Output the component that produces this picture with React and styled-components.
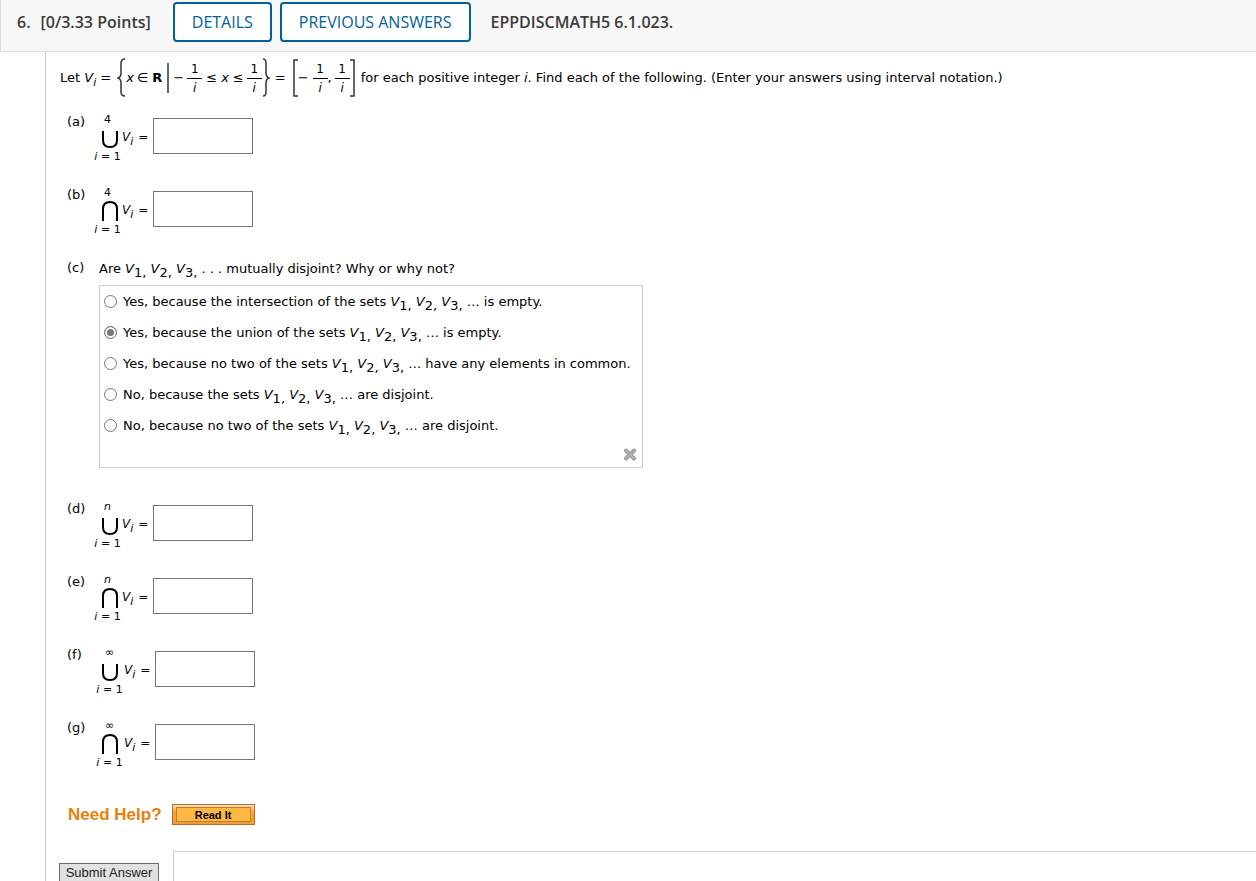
import React, { useState } from "react";
import styled, { createGlobalStyle } from "styled-components";

const GlobalStyle = createGlobalStyle`
  body {
    margin: 0;
    background: white;
    color: #000;
    font-family: Verdana, "DejaVu Sans", sans-serif;
    font-size: 13px;
    line-height: 18px;
  }

  *, *::before, *::after {
    box-sizing: border-box;
  }
`;

const Page = styled.div`
  display: flex;
  flex-direction: column;
  height: 100vh;
  overflow: hidden;
`;

const Header = styled.header`
  flex: none;
  display: flex;
  align-items: center;
  gap: 8px;
  padding: 2px 16px 9px;
  background: #f7f7f7;
  border-left: 1px solid #ddd;
  border-bottom: 1px solid #ddd;
  color: #3c3c3c;
  font-family: "Open Sans", sans-serif;
  font-size: 16px;
  font-weight: 600;
  line-height: 24px;
`;

const Points = styled.span`
  margin: 0 14px 0 2px;
`;

const SourceCode = styled.span`
  margin-left: 12px;
`;

const HeaderButton = styled.button`
  height: 40px;
  padding: 0 17px;
  border: 2px solid #00609c;
  border-radius: 4px;
  background: white;
  color: #00609c;
  font: inherit;
  font-weight: 500;
  cursor: pointer;
`;

const Body = styled.main`
  flex: 1;
  display: flex;
  flex-direction: column;
  margin-left: 45px;
  border-left: 1px solid #ccc;
`;

const Intro = styled.div`
  display: flex;
  align-items: center;
  height: 52px;
  padding-left: 14px;
  white-space: nowrap;
`;

const Term = styled.span`
  margin-right: ${(props) => props.$space ?? 4}px;
`;

const Delimiter = styled.svg`
  flex: none;
  fill: none;
  stroke: #333;
  stroke-width: 1.5;
  margin-right: ${(props) => props.$space || 0}px;
`;

const Frac = styled.span`
  display: inline-flex;
  flex-direction: column;
  align-items: center;
  width: 15px;
  margin-right: ${(props) => props.$space || 0}px;
  font-size: 12px;
  line-height: 18px;

  & > :first-child {
    width: 100%;
    border-bottom: 1px solid #000;
    text-align: center;
  }
`;

const Sub = styled.sub`
  font-size: ${(props) => (props.$small ? 11 : 13)}px;
  line-height: 0;
  vertical-align: -4px;
`;

const Part = styled.section`
  display: grid;
  grid-template-columns: 27px 1fr;
  padding-left: 21px;
  min-height: 73px;
`;

const PartLabel = styled.span`
  padding-top: 9px;
`;

const Equation = styled.label`
  display: flex;
  align-items: flex-start;
  height: 73px;
  padding-left: ${(props) => (props.$wide ? 2 : 0)}px;
`;

const BigOperator = styled.span`
  display: flex;
  flex-direction: column;
  align-items: center;
  width: 27px;
  padding-top: 8px;
  font-size: 11px;
  line-height: 15px;
  white-space: nowrap;
`;

const OperatorSign = styled.span`
  display: flex;
  height: 22px;
  margin-left: ${(props) => (props.$wide ? 0 : 4)}px;

  svg {
    display: block;
    fill: none;
    stroke: #000;
    stroke-width: 2;
  }
`;

const Operand = styled.span`
  display: flex;
  gap: 5px;
  width: 32px;
  padding: 24px 0 0 1px;
  font-size: 12px;
  white-space: nowrap;
`;

const AnswerInput = styled.input`
  width: 100px;
  height: 36px;
  margin-top: 14px;
  padding: 4px;
  border: 1px solid #767676;
  border-radius: 0;
  background: white;
  font: inherit;
`;

const ChoicePart = styled.div`
  padding: 10px 0 23px 5px;
`;

const ChoiceBox = styled.fieldset`
  width: 544px;
  max-width: 100%;
  margin: 7px 0 0;
  padding: 0 5px 6px 4px;
  border: 1px solid #ccc;
`;

const Choice = styled.label`
  display: flex;
  align-items: center;
  gap: 6px;
  height: 31px;
  white-space: nowrap;
`;

const Radio = styled.input`
  appearance: none;
  flex: none;
  width: 13px;
  height: 13px;
  margin: 0;
  border: 1px solid #767676;
  border-radius: 50%;
  background: white;

  &:checked {
    background: #767676;
    box-shadow: inset 0 0 0 2px white;
  }
`;

const WrongMark = styled.svg`
  display: block;
  margin: 7px 0 0 auto;
`;

const HelpRow = styled.div`
  display: flex;
  align-items: center;
  gap: 10px;
  padding: 21px 0 0 22px;
  color: #ea8008;
  font-family: "Liberation Sans", Arial, sans-serif;
  font-size: 17px;
  font-weight: bold;
`;

const ReadButton = styled.button`
  width: 83px;
  height: 21px;
  padding: 2px 3px;
  border: 1px solid #b06f2c;
  border-radius: 0;
  background: linear-gradient(#ffe0bd, #ff9f35 35%, #f99a2f);
  cursor: pointer;
`;

const ReadButtonFace = styled.span`
  display: block;
  height: 15px;
  border: 1px solid #b5803a;
  background: #ffb942;
  color: #000;
  font: bold 11px/14px "Liberation Sans", Arial, sans-serif;
`;

const Footer = styled.footer`
  flex: 1;
  display: flex;
  align-items: flex-start;
  gap: 14px;
  margin-top: 26px;
  padding-left: 13px;
`;

const SubmitButton = styled.button`
  flex: none;
  width: 100px;
  height: 20px;
  margin-top: 12px;
  padding: 0;
  border: 1px solid #6b6b6b;
  border-radius: 0;
  background: #e1e1e1;
  color: #222;
  font: 13px/18px "Liberation Sans", Arial, sans-serif;
  cursor: pointer;
`;

const FooterPanel = styled.div`
  flex: 1;
  height: 100%;
  border-top: 1px solid #ccc;
  border-left: 1px solid #ccc;
`;

const choices = [
  ["Yes, because the intersection of the sets ", " is empty."],
  ["Yes, because the union of the sets ", " is empty."],
  ["Yes, because no two of the sets ", " have any elements in common."],
  ["No, because the sets ", " are disjoint."],
  ["No, because no two of the sets ", " are disjoint."],
];

const Sets = () => (
  <>
    <i>V</i>
    <Sub>1,</Sub> <i>V</i>
    <Sub>2,</Sub> <i>V</i>
    <Sub>3,</Sub>{" "}
  </>
);

const OneOverI = ({ space }) => (
  <Frac $space={space}>
    <span>1</span>
    <i>i</i>
  </Frac>
);

const SetPart = ({ label, union, upper }) => (
  <Part>
    <PartLabel>({label})</PartLabel>
    <Equation $wide={upper === "∞"}>
      <BigOperator>
        <span>{upper === "n" ? <i>n</i> : upper}</span>
        <OperatorSign $wide={upper === "∞"}>
          <svg
            width="18"
            height="22"
            role="img"
            aria-label={union ? "union" : "intersection"}
          >
            <path
              d={
                union
                  ? "M2 4V13C2 18 4.5 20 9 20S16 18 16 13V4"
                  : "M2 21V9C2 4 4.5 2 9 2S16 4 16 9V21"
              }
            />
          </svg>
        </OperatorSign>
        <span>
          <i>i</i> = 1
        </span>
      </BigOperator>
      <Operand>
        <span>
          <i>V</i>
          <Sub $small>
            <i>i</i>
          </Sub>
        </span>
        <span>=</span>
      </Operand>
      <AnswerInput type="text" />
    </Equation>
  </Part>
);

const App = () => {
  const [selected, setSelected] = useState(1);

  return (
    <Page>
      <GlobalStyle />
      <Header>
        <span>6.</span>
        <Points>[0/3.33 Points]</Points>
        <HeaderButton type="button">DETAILS</HeaderButton>
        <HeaderButton type="button">PREVIOUS ANSWERS</HeaderButton>
        <SourceCode>EPPDISCMATH5 6.1.023.</SourceCode>
      </Header>

      <Body>
        <Intro>
          <Term $space={6}>
            Let <i>V</i>
            <Sub $small>
              <i>i</i>
            </Sub>{" "}
            =
          </Term>
          <Delimiter width="9" height="40">
            <path d="M8 1Q4 1 4 5V15Q4 19 1 20Q4 21 4 25V34Q4 38 8 38" />
          </Delimiter>
          <Term $space={3}>
            <i>x</i>
          </Term>
          <Term>∈</Term>
          <Term>
            <b>R</b>
          </Term>
          <Delimiter width="4" height="32" $space={3}>
            <path d="M2 1V31" />
          </Delimiter>
          <Term $space={3}>−</Term>
          <OneOverI space={4} />
          <Term>≤</Term>
          <Term>
            <i>x</i>
          </Term>
          <Term $space={3}>≤</Term>
          <OneOverI />
          <Delimiter width="8" height="40" $space={5}>
            <path d="M1 1Q4 1 4 5V15Q4 19 7 20Q4 21 4 25V34Q4 38 1 38" />
          </Delimiter>
          <Term $space={6}>=</Term>
          <Delimiter width="6" height="40">
            <path d="M6 2H2V38H6" />
          </Delimiter>
          <Term>−</Term>
          <OneOverI />
          <Term $space={3}>,</Term>
          <OneOverI />
          <Delimiter width="6" height="40" $space={5}>
            <path d="M0 2H4V38H0" />
          </Delimiter>
          <span>
            for each positive integer <i>i</i>. Find each of the following.
            (Enter your answers using interval notation.)
          </span>
        </Intro>

        <SetPart label="a" union upper="4" />
        <SetPart label="b" upper="4" />

        <Part>
          <PartLabel>(c)</PartLabel>
          <ChoicePart>
            <div>
              Are <Sets />. . . mutually disjoint? Why or why not?
            </div>
            <ChoiceBox aria-label="Mutually disjoint">
              {choices.map(([before, after], index) => (
                <Choice key={before}>
                  <Radio
                    type="radio"
                    name="disjoint"
                    checked={selected === index}
                    onChange={() => setSelected(index)}
                  />
                  <span>
                    {before}
                    <Sets />…{after}
                  </span>
                </Choice>
              ))}
              <WrongMark
                width="14"
                height="13"
                role="img"
                aria-label="incorrect"
              >
                <path
                  d="M3 2.5L11 10.5M11 2.5L3 10.5"
                  stroke="#999"
                  strokeWidth="4"
                  strokeLinecap="round"
                />
                <path
                  d="M3 2.5L11 10.5M11 2.5L3 10.5"
                  stroke="#b0b0b0"
                  strokeWidth="2"
                  strokeLinecap="round"
                />
              </WrongMark>
            </ChoiceBox>
          </ChoicePart>
        </Part>

        <SetPart label="d" union upper="n" />
        <SetPart label="e" upper="n" />
        <SetPart label="f" union upper="∞" />
        <SetPart label="g" upper="∞" />

        <HelpRow>
          Need Help?
          <ReadButton type="button">
            <ReadButtonFace>Read It</ReadButtonFace>
          </ReadButton>
        </HelpRow>

        <Footer>
          <SubmitButton type="submit">Submit Answer</SubmitButton>
          <FooterPanel />
        </Footer>
      </Body>
    </Page>
  );
};

export default App;
